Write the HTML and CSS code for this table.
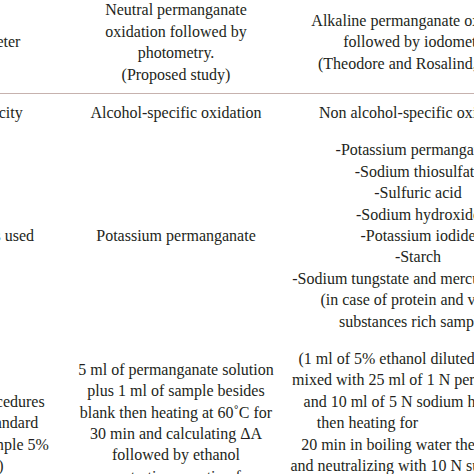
FILE: index.html
```html
<!DOCTYPE html>
<html lang="en">
<head>
<meta charset="utf-8">
<title>Comparison table</title>
<link rel="stylesheet" href="styles.css">
</head>
<body>
<div class="table">
  <div class="row head">
    <div class="cell">Parameter</div>
    <div class="cell">Neutral permanganate<br>oxidation followed by<br>photometry.<br>(Proposed study)</div>
    <div class="cell">Alkaline permanganate oxidation<br>followed by iodometry.<br>(Theodore and Rosalind, 1935)</div>
  </div>
  <div class="row">
    <div class="cell">Specificity</div>
    <div class="cell">Alcohol-specific oxidation</div>
    <div class="cell">Non alcohol-specific oxidation</div>
  </div>
  <div class="row">
    <div class="cell">Reagents used</div>
    <div class="cell">Potassium permanganate</div>
    <div class="cell">-Potassium permanganate<br>-Sodium thiosulfate<br>-Sulfuric acid<br>-Sodium hydroxide<br>-Potassium iodide<br>-Starch<br>-Sodium tungstate and mercuric sulfate<br>(in case of protein and volatile<br>substances rich samples)</div>
  </div>
  <div class="row">
    <div class="cell">Assay procedures<br>for the standard<br>ethanol sample 5%<br>(v/v)</div>
    <div class="cell">5 ml of permanganate solution<br>plus 1 ml of sample besides<br>blank then heating at 60˚C for<br>30 min and calculating ΔA<br>followed by ethanol<br>concentration equation from<br>standard curve.</div>
    <div class="cell">(1 ml of 5% ethanol diluted to 50 ml)<br>mixed with 25 ml of 1 N permanganate<br>and 10 ml of 5 N sodium hydroxide<br>then heating for<span class="gap"></span><br>20 min in boiling water then cooling<br>and neutralizing with 10 N sulfuric acid<br>then titration with thiosulfate<br>using starch as indicator</div>
  </div>
</div>
</body>
</html>
```

FILE: styles.css
```css
html, body {
  margin: 0;
  padding: 0;
  background: #ffffff;
  overflow: hidden;
}

.table {
  margin: -8.7px 0 0 -95px;
  width: 650px;
  font-family: "Liberation Serif", "Times New Roman", serif;
  font-size: 16px;
  line-height: 21.4px;
  color: #231f20;
}

.row {
  display: grid;
  grid-template-columns: 166px 210px 274px;
  align-items: center;
  padding: 8px 0;
}

.head {
  border-bottom: 1px solid #c6b2ae;
}

.cell {
  text-align: center;
  white-space: nowrap;
}

.gap {
  display: inline-block;
  width: 101px;
}
```
